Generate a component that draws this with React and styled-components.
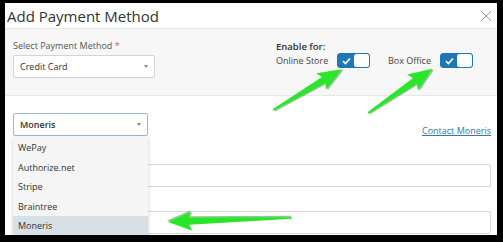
import React from 'react';
import styled, { createGlobalStyle } from 'styled-components';

const GlobalStyle = createGlobalStyle`
  html, body {
    margin: 0;
    padding: 0;
    background: #000;
  }
  body {
    font-family: "Open Sans", "Liberation Sans", sans-serif;
  }
`;

const Screen = styled.div`
  position: relative;
  width: 503px;
  height: 242px;
  overflow: hidden;
  background: #000;
  padding: 3px 6px 0 5px;
  box-sizing: border-box;
`;

const Modal = styled.div`
  width: 492px;
  height: 232px;
  background: #fff;
  overflow: hidden;
  display: flex;
  flex-direction: column;
`;

const Header = styled.div`
  height: 26px;
  flex-shrink: 0;
  display: flex;
  align-items: center;
  justify-content: space-between;
  padding: 0 4px 0 2px;
  border-bottom: 1px solid #e6e6e6;
  box-sizing: border-box;
`;

const Title = styled.h2`
  margin: 0;
  font-size: 15px;
  font-weight: 400;
  color: #333;
`;

const Close = styled.button`
  border: 0;
  background: none;
  padding: 0;
  width: 14px;
  height: 14px;
  display: flex;
  align-items: center;
  justify-content: center;
`;

const TopSection = styled.div`
  height: 67px;
  flex-shrink: 0;
  background: #f7f7f7;
  border-bottom: 1px solid #e8e8e8;
  box-sizing: border-box;
  display: flex;
  padding: 10px 0 0 8px;
`;

const Column = styled.div`
  width: ${(p) => p.width}px;
  display: flex;
  flex-direction: column;
`;

const Label = styled.label`
  font-size: 9px;
  color: #555;
  line-height: 14px;
  margin-bottom: 2px;
`;

const Required = styled.span`
  color: #d9534f;
`;

const StrongLabel = styled.div`
  font-size: 9.5px;
  font-weight: 600;
  color: #333;
  line-height: 13px;
  margin-top: 1px;
`;

const Select = styled.div`
  width: ${(p) => p.width}px;
  height: 23px;
  box-sizing: border-box;
  border: 1px solid ${(p) => (p.open ? '#9fb7cc' : '#d4d4d4')};
  border-radius: 2px;
  background: #fff;
  display: flex;
  align-items: center;
  justify-content: space-between;
  padding: 0 6px 0 6px;
  font-size: 9px;
  color: #333;
  font-weight: ${(p) => (p.open ? 600 : 400)};
`;

const Caret = styled.span`
  width: 0;
  height: 0;
  border-left: 2.5px solid transparent;
  border-right: 2.5px solid transparent;
  border-top: 3px solid #888;
`;

const ToggleRow = styled.div`
  display: flex;
  align-items: center;
`;

const ToggleItem = styled.div`
  display: flex;
  align-items: center;
  font-size: 9px;
  color: #444;
  margin-right: ${(p) => p.gapRight}px;
`;

const ToggleText = styled.span`
  width: ${(p) => p.width}px;
`;

const Toggle = styled.div`
  width: 33px;
  height: 15px;
  box-sizing: border-box;
  border: 1.5px solid #1e78b6;
  border-radius: 3px;
  background: #1e78b6;
  display: flex;
  align-items: stretch;
`;

const ToggleOn = styled.div`
  flex: 1;
  display: flex;
  align-items: center;
  justify-content: center;
`;

const Knob = styled.div`
  width: 15px;
  background: #fff;
  border-radius: 2.5px;
`;

const Body = styled.div`
  position: relative;
  flex: 1;
  padding: 17px 6px 0 8px;
`;

const SelectRow = styled.div`
  display: flex;
  justify-content: space-between;
  align-items: flex-end;
`;

const Link = styled.a`
  font-size: 9px;
  color: #3a74a8;
  text-decoration: underline;
  line-height: 12px;
  margin-bottom: -1px;
`;

const Input = styled.div`
  height: 23px;
  box-sizing: border-box;
  border: 1px solid #d8d8d8;
  border-radius: 2px;
  background: #fff;
  margin-top: ${(p) => p.top}px;
`;

const Menu = styled.ul`
  position: absolute;
  left: 8px;
  top: 40px;
  width: 135px;
  margin: 0;
  padding: 2px 0 0;
  list-style: none;
  background: #f5f5f5;
  box-shadow: 0 2px 4px rgba(0, 0, 0, 0.2);
`;

const MenuItem = styled.li`
  height: 19.5px;
  display: flex;
  align-items: center;
  padding-left: 5px;
  font-size: 9px;
  color: #333;
  background: ${(p) => (p.active ? '#d7e0e6' : 'transparent')};
`;

const Overlay = styled.svg`
  position: absolute;
  left: 0;
  top: 0;
  pointer-events: none;
`;

const Arrow = ({ x, y, angle, length }) => {
  const L = length;
  const pts = [
    [0, -0.8],
    [L - 21, -3.4],
    [L - 24, -9.5],
    [L, 0],
    [L - 24, 9.5],
    [L - 21, 3.4],
    [0, 0.8],
  ]
    .map((p) => p.join(','))
    .join(' ');
  return (
    <g transform={`translate(${x} ${y}) rotate(${angle})`}>
      <polygon points={pts} fill="#1a9a1a" transform="translate(1 1.5)" opacity="0.5" />
      <polygon points={pts} fill="#2be52b" />
    </g>
  );
};

const providers = ['WePay', 'Authorize.net', 'Stripe', 'Braintree', 'Moneris'];

const Check = () => (
  <svg width="9" height="8" viewBox="0 0 9 8">
    <path d="M1 4.2 L3.5 6.5 L8 1.5" stroke="#fff" strokeWidth="1.6" fill="none" />
  </svg>
);

export default function App() {
  return (
    <Screen>
      <GlobalStyle />
      <Modal>
        <Header>
          <Title>Add Payment Method</Title>
          <Close aria-label="Close">
            <svg width="12" height="12" viewBox="0 0 12 12">
              <path d="M1 1 L11 11 M11 1 L1 11" stroke="#9a9a9a" strokeWidth="1" />
            </svg>
          </Close>
        </Header>
        <TopSection>
          <Column width={263}>
            <Label>
              Select Payment Method <Required>*</Required>
            </Label>
            <Select width={142}>
              Credit Card
              <Caret />
            </Select>
          </Column>
          <Column width={220}>
            <StrongLabel>Enable for:</StrongLabel>
            <ToggleRow>
              <ToggleItem gapRight={18}>
                <ToggleText width={61}>Online Store</ToggleText>
                <Toggle>
                  <ToggleOn>
                    <Check />
                  </ToggleOn>
                  <Knob />
                </Toggle>
              </ToggleItem>
              <ToggleItem gapRight={0}>
                <ToggleText width={52}>Box Office</ToggleText>
                <Toggle>
                  <ToggleOn>
                    <Check />
                  </ToggleOn>
                  <Knob />
                </Toggle>
              </ToggleItem>
            </ToggleRow>
          </Column>
        </TopSection>
        <Body>
          <SelectRow>
            <Select width={135} open>
              Moneris
              <Caret />
            </Select>
            <Link href="#">Contact Moneris</Link>
          </SelectRow>
          <Input top={28} />
          <Input top={24} />
          <Menu>
            {providers.map((p) => (
              <MenuItem key={p} active={p === 'Moneris'}>
                {p}
              </MenuItem>
            ))}
          </Menu>
        </Body>
      </Modal>
      <Overlay width="503" height="242" viewBox="0 0 503 242">
        <Arrow x={273} y={110} angle={-30.7} length={80} />
        <Arrow x={368} y={113} angle={-34.5} length={78} />
        <Arrow x={292} y={218} angle={178.2} length={124} />
      </Overlay>
    </Screen>
  );
}
